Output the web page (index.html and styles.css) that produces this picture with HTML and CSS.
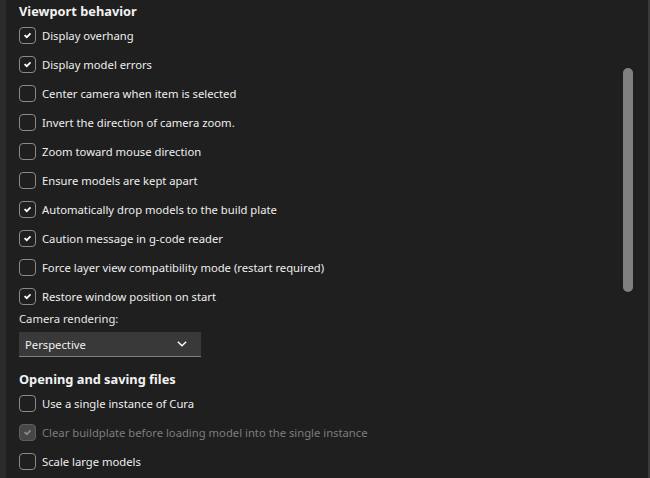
FILE: index.html
```html
<!DOCTYPE html>
<html>
<head>
<meta charset="utf-8">
<link rel="stylesheet" href="styles.css">
</head>
<body>
<div class="page">
  <div class="content">
    <div class="heading">Viewport behavior</div>
    <div class="row"><span class="box on"><svg viewBox="0 0 17 17"><path d="M5.9 8.7 L7.7 10.4 L11.2 6.8"/></svg></span><span class="label">Display overhang</span></div>
    <div class="row"><span class="box on"><svg viewBox="0 0 17 17"><path d="M5.9 8.7 L7.7 10.4 L11.2 6.8"/></svg></span><span class="label">Display model errors</span></div>
    <div class="row"><span class="box"></span><span class="label">Center camera when item is selected</span></div>
    <div class="row"><span class="box"></span><span class="label">Invert the direction of camera zoom.</span></div>
    <div class="row"><span class="box"></span><span class="label">Zoom toward mouse direction</span></div>
    <div class="row"><span class="box"></span><span class="label">Ensure models are kept apart</span></div>
    <div class="row"><span class="box on"><svg viewBox="0 0 17 17"><path d="M5.9 8.7 L7.7 10.4 L11.2 6.8"/></svg></span><span class="label">Automatically drop models to the build plate</span></div>
    <div class="row"><span class="box on"><svg viewBox="0 0 17 17"><path d="M5.9 8.7 L7.7 10.4 L11.2 6.8"/></svg></span><span class="label">Caution message in g-code reader</span></div>
    <div class="row"><span class="box"></span><span class="label">Force layer view compatibility mode (restart required)</span></div>
    <div class="row"><span class="box on"><svg viewBox="0 0 17 17"><path d="M5.9 8.7 L7.7 10.4 L11.2 6.8"/></svg></span><span class="label">Restore window position on start</span></div>
    <div class="field-label">Camera rendering:</div>
    <div class="select"><span>Perspective</span><svg class="chev" viewBox="0 0 10 6"><path d="M0.8 0.8 L5 4.8 L9.2 0.8"/></svg></div>
    <div class="heading second">Opening and saving files</div>
    <div class="row"><span class="box"></span><span class="label">Use a single instance of Cura</span></div>
    <div class="row disabled"><span class="box on"><svg viewBox="0 0 17 17"><path d="M5.9 8.7 L7.7 10.4 L11.2 6.8"/></svg></span><span class="label">Clear buildplate before loading model into the single instance</span></div>
    <div class="row"><span class="box"></span><span class="label">Scale large models</span></div>
  </div>
  <div class="scrollbar"></div>
</div>
</body>
</html>
```
FILE: styles.css
```css
html, body {
  margin: 0;
  padding: 0;
  height: 100%;
  overflow: hidden;
}
body {
  background: #1f1f1f;
  font-family: "Noto Sans", "Open Sans", sans-serif;
  color: #eeeeee;
  font-size: 11.25px;
}
.page {
  position: relative;
  height: 478px;
  box-sizing: border-box;
  border-left: 6px solid #2b2b2b;
  border-right: 2px solid #3a3a3a;
}
.content {
  padding-left: 13px;
  display: flex;
  flex-direction: column;
}
.heading {
  font-size: 12.8px;
  font-weight: 700;
  line-height: 19px;
  margin-top: 2px;
  color: #f2f2f2;
}
.heading.second {
  line-height: 20px;
  margin-top: 12px;
}
.row {
  height: 29px;
  display: flex;
  align-items: center;
}
.box {
  width: 17px;
  height: 17px;
  box-sizing: border-box;
  border: 1px solid #8a8a8a;
  border-radius: 4px;
  margin-right: 6px;
  flex: none;
  display: flex;
}
.box svg {
  width: 15px;
  height: 15px;
  margin: 0;
}
.box svg path {
  fill: none;
  stroke: #ffffff;
  stroke-width: 2;
  stroke-linecap: square;
}
.label {
  line-height: 15px;
  margin-top: -1px;
}
.disabled .box {
  background: #474747;
  border-color: #5e5e5e;
}
.disabled .box svg path {
  stroke: #8a8a8a;
}
.disabled .label {
  color: #7d7d7d;
}
.field-label {
  line-height: 15px;
  color: #e6e6e6;
}
.select {
  margin-top: 6px;
  width: 182px;
  height: 25px;
  box-sizing: border-box;
  background: #393939;
  border-bottom: 1px solid #808080;
  display: flex;
  align-items: center;
  justify-content: space-between;
  padding: 0 14px 0 6px;
  color: #f0f0f0;
}
.chev {
  width: 10px;
  height: 6px;
}
.chev path {
  fill: none;
  stroke: #ffffff;
  stroke-width: 1.4;
}
.scrollbar {
  position: absolute;
  left: 617px;
  top: 68px;
  width: 10px;
  height: 224px;
  border-radius: 5px;
  background: #808080;
}
```
